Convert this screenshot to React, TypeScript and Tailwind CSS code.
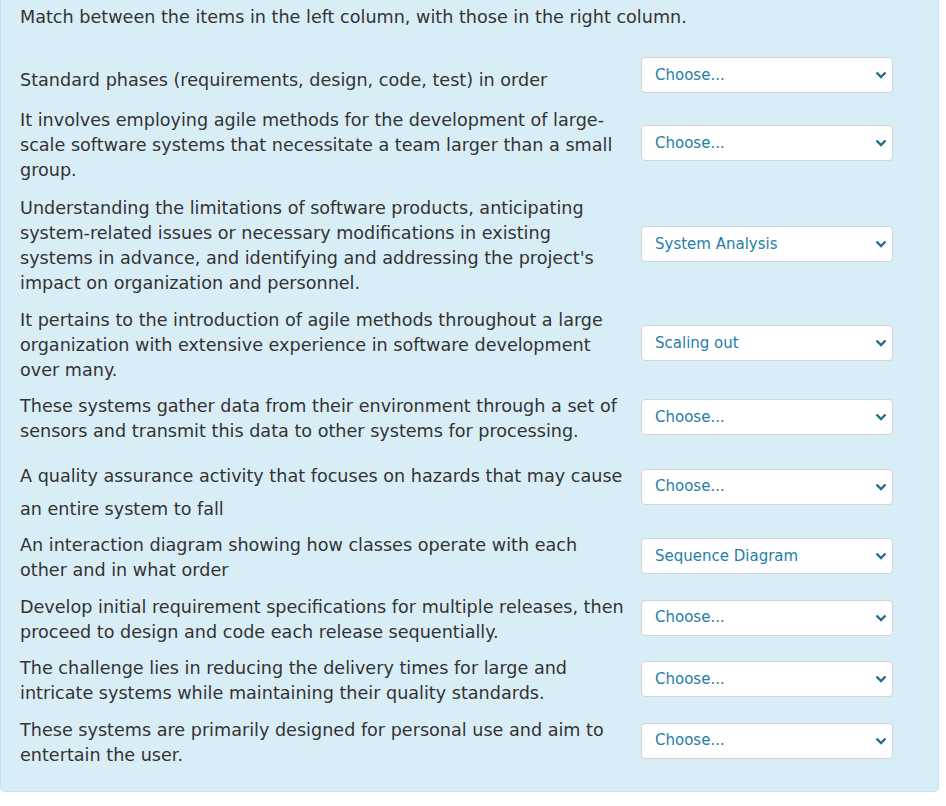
import React from "react";

type Row = {
  text: string[];
  value: string;
  rowClass?: string;
  textClass?: string;
  firstLineClass?: string;
};

const OPTIONS = [
  "Choose...",
  "System Analysis",
  "Scaling out",
  "Sequence Diagram",
];

const rows: Row[] = [
  {
    text: ["Standard phases (requirements, design, code, test) in order"],
    value: "Choose...",
    rowClass: "pt-[6px] pb-[4.5px]",
    textClass: "pt-[6px]",
  },
  {
    text: [
      "It involves employing agile methods for the development of large-scale software systems that necessitate a team larger than a small group.",
    ],
    value: "Choose...",
    rowClass: "pt-[6px] pb-[7.5px]",
  },
  {
    text: [
      "Understanding the limitations of software products, anticipating system-related issues or necessary modifications in existing systems in advance, and identifying and addressing the project's impact on organization and personnel.",
    ],
    value: "System Analysis",
  },
  {
    text: [
      "It pertains to the introduction of agile methods throughout a large organization with extensive experience in software development over many.",
    ],
    value: "Scaling out",
  },
  {
    text: [
      "These systems gather data from their environment through a set of sensors and transmit this data to other systems for processing.",
    ],
    value: "Choose...",
  },
  {
    text: [
      "A quality assurance activity that focuses on hazards that may cause",
      "an entire system to fall",
    ],
    value: "Choose...",
    firstLineClass: "py-[8px]",
  },
  {
    text: [
      "An interaction diagram showing how classes operate with each other and in what order",
    ],
    value: "Sequence Diagram",
  },
  {
    text: [
      "Develop initial requirement specifications for multiple releases, then proceed to design and code each release sequentially.",
    ],
    value: "Choose...",
  },
  {
    text: [
      "The challenge lies in reducing the delivery times for large and intricate systems while maintaining their quality standards.",
    ],
    value: "Choose...",
  },
  {
    text: [
      "These systems are primarily designed for personal use and aim to entertain the user.",
    ],
    value: "Choose...",
  },
];

const Chooser = ({ value }: { value: string }) => (
  <div className="relative mb-[4px] w-[252px] shrink-0">
    <select
      defaultValue={value}
      className="block h-[36px] w-full appearance-none rounded-[4px] border border-[#ced4da] bg-white pl-[13px] pr-8 text-[15px] text-[#1f7ea6] outline-none"
    >
      {OPTIONS.map((o) => (
        <option key={o} value={o}>
          {o}
        </option>
      ))}
    </select>
    <svg
      className="pointer-events-none absolute right-[6px] top-1/2 -translate-y-1/2"
      width="12"
      height="8"
      viewBox="0 0 12 8"
    >
      <polyline
        points="1.5,1.5 6,6 10.5,1.5"
        fill="none"
        stroke="#1e6f8c"
        strokeWidth="2.4"
      />
    </svg>
  </div>
);

export default function App() {
  return (
    <div className="min-h-[806px] bg-white font-['DejaVu_Sans',sans-serif] text-[17.6px] leading-[25px] text-[#333]">
      <div className="w-[939px] rounded-b-[5px] border-x border-b border-[#bce8f1] bg-[#d9edf7] pl-[19px] pt-[5px] pb-[18px]">
        <p className="mb-[21px]">
          Match between the items in the left column, with those in the right column.
        </p>
        {rows.map((r, i) => (
          <div
            key={i}
            className={`flex items-center ${r.rowClass ?? "pt-[6px] pb-[5.5px]"}`}
          >
            <div className={`w-[621px] shrink-0 pr-[12px] ${r.textClass ?? ""}`}>
              {r.text.map((t, j) => (
                <div key={j} className={j === 0 ? r.firstLineClass ?? "" : ""}>
                  {t}
                </div>
              ))}
            </div>
            <Chooser value={r.value} />
          </div>
        ))}
      </div>
    </div>
  );
}
